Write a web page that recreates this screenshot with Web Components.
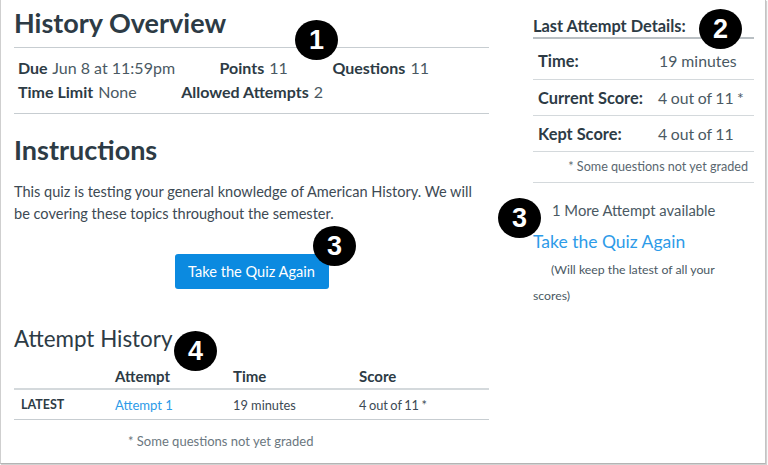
<!DOCTYPE html>
<html lang="en">
<head>
<meta charset="utf-8">
<title>History Overview</title>
<style>
  html, body { margin: 0; height: 100%; background: #fff; }
  body { font-family: Lato, "Liberation Sans", sans-serif; color: #2d3b45; overflow: hidden; }
</style>
</head>
<body>
<quiz-page>
  <quiz-overview slot="main"></quiz-overview>
  <quiz-instructions slot="main"></quiz-instructions>
  <attempt-history slot="main"></attempt-history>
  <attempt-details slot="side"></attempt-details>
  <next-attempt slot="side"></next-attempt>
  <step-badge n="1" style="left:294px;top:20px"></step-badge>
  <step-badge n="2" style="left:698px;top:9px"></step-badge>
  <step-badge n="3" style="left:497px;top:198px"></step-badge>
  <step-badge n="3" style="left:312px;top:226px"></step-badge>
  <step-badge n="4" style="left:173px;top:331px"></step-badge>
</quiz-page>

<script>
class QuizPage extends HTMLElement {
  constructor() {
    super();
    this.attachShadow({ mode: "open" });
    this.shadowRoot.innerHTML = `
      <style>
        :host {
          display: grid;
          grid-template-columns: 475px 221px;
          column-gap: 44px;
          box-sizing: border-box;
          width: 766px;
          height: 464px;
          padding: 0 0 0 13px;
          border-left: 1px solid #cfcfcf;
          border-right: 1px solid #c4c4c4;
          border-bottom: 1px solid #b4b4b4;
          box-shadow: 1px 1px 1px rgba(0, 0, 0, 0.18);
          position: relative;
        }
        .col { display: flex; flex-direction: column; min-width: 0; }
      </style>
      <div class="col"><slot name="main"></slot></div>
      <div class="col"><slot name="side"></slot></div>
      <slot></slot>
    `;
  }
}

class QuizOverview extends HTMLElement {
  constructor() {
    super();
    this.attachShadow({ mode: "open" });
    this.shadowRoot.innerHTML = `
      <style>
        :host { display: block; padding-top: 7px; }
        h1 {
          margin: 0;
          height: 40px;
          line-height: 32px;
          font-size: 27px;
          font-weight: 700;
          border-bottom: 1px solid #c7cdd1;
        }
        .facts {
          display: flex;
          flex-wrap: wrap;
          column-gap: 44.5px;
          padding: 8px 30px 9px 4px;
          border-bottom: 1px solid #c7cdd1;
          font-size: 16px;
          line-height: 24px;
          color: #4a5963;
        }
        b { font-weight: 700; color: #2d3b45; margin-right: 1px; }
      </style>
      <h1>History Overview</h1>
      <div class="facts">
        <span><b>Due</b> Jun 8 at 11:59pm</span>
        <span><b>Points</b> 11</span>
        <span><b>Questions</b> 11</span>
        <span><b>Time Limit</b> None</span>
        <span><b>Allowed Attempts</b> 2</span>
      </div>
    `;
  }
}

class QuizInstructions extends HTMLElement {
  constructor() {
    super();
    this.attachShadow({ mode: "open" });
    this.shadowRoot.innerHTML = `
      <style>
        :host { display: block; padding-top: 19px; }
        h2 { margin: 0 0 14px; font-size: 27px; line-height: 34px; font-weight: 700; }
        p { margin: 0; font-size: 14.55px; line-height: 22px; color: #3d4a54; }
        .action { display: flex; justify-content: center; margin-top: 29px; }
        a {
          display: block;
          width: 154px;
          height: 35px;
          line-height: 35px;
          text-align: center;
          background: #0b8ae0;
          color: #fff;
          border-radius: 3px;
          font-size: 14.6px;
        }
      </style>
      <h2>Instructions</h2>
      <p>This quiz is testing your general knowledge of American History. We will be covering these topics throughout the semester.</p>
      <div class="action"><a>Take the Quiz Again</a></div>
    `;
  }
}

class AttemptHistory extends HTMLElement {
  constructor() {
    super();
    this.attachShadow({ mode: "open" });
    this.shadowRoot.innerHTML = `
      <style>
        :host { display: block; padding-top: 36px; }
        h3 { margin: 0 0 9px; font-size: 22.4px; line-height: 28px; font-weight: 400; }
        .row {
          display: grid;
          grid-template-columns: 101px 118px 126px 1fr;
          align-items: center;
        }
        .head {
          height: 28px;
          padding-top: 1px;
          box-sizing: border-box;
          border-bottom: 2px solid #d4d9dc;
          font-size: 15px;
          font-weight: 700;
        }
        .body {
          height: 29px;
          border-bottom: 1px solid #c7cdd1;
          font-size: 12.8px;
          color: #3d4a54;
        }
        .score { word-spacing: -0.8px; }
        .tag { font-size: 12.5px; font-weight: 700; padding-left: 7px; color: #2d3b45; }
        a { color: #2d9be8; font-size: 13.1px; }
        .note { margin-top: 13px; padding-left: 114px; font-size: 13px; line-height: 17px; color: #6b7780; }
      </style>
      <h3>Attempt History</h3>
      <div class="row head"><span></span><span>Attempt</span><span>Time</span><span>Score</span></div>
      <div class="row body">
        <span class="tag">LATEST</span>
        <a>Attempt 1</a>
        <span>19 minutes</span>
        <span class="score">4 out of 11 *</span>
      </div>
      <div class="note">* Some questions not yet graded</div>
    `;
  }
}

class AttemptDetails extends HTMLElement {
  constructor() {
    super();
    this.attachShadow({ mode: "open" });
    this.shadowRoot.innerHTML = `
      <style>
        :host { display: block; padding-top: 17px; }
        .title {
          height: 20px;
          line-height: 18px;
          font-size: 16.4px;
          font-weight: 700;
          border-bottom: 2px solid #b9bfc3;
        }
        .row {
          display: grid;
          grid-template-columns: 120px 1fr;
          align-items: center;
          height: 34px;
          padding: 0 0 1px 5px;
          border-bottom: 1px solid #d4d9dc;
          font-size: 15.8px;
          color: #4a5963;
        }
        .row.first { height: 36px; padding-top: 3px; }
        .row b { color: #2d3b45; font-size: 16.4px; }
        .score { word-spacing: -0.5px; }
        .note {
          height: 30px;
          line-height: 30px;
          text-align: right;
          padding-right: 6px;
          border-bottom: 1px solid #d4d9dc;
          font-size: 12.6px;
          color: #5a6770;
        }
      </style>
      <div class="title">Last Attempt Details:</div>
      <div class="row first"><b>Time:</b><span style="padding-left:1px">19 minutes</span></div>
      <div class="row"><b>Current Score:</b><span class="score">4 out of 11 *</span></div>
      <div class="row"><b>Kept Score:</b><span class="score">4 out of 11</span></div>
      <div class="note">* Some questions not yet graded</div>
    `;
  }
}

class NextAttempt extends HTMLElement {
  constructor() {
    super();
    this.attachShadow({ mode: "open" });
    this.shadowRoot.innerHTML = `
      <style>
        :host { display: block; padding-top: 18px; color: #4a5963; }
        .more { padding-left: 19px; font-size: 14.8px; line-height: 18px; }
        a { display: block; margin-top: 12px; font-size: 17.5px; line-height: 22px; color: #2d9be8; }
        p { margin: 4px 0 0; font-size: 12.3px; line-height: 26px; text-indent: 18px; }
      </style>
      <div class="more">1 More Attempt available</div>
      <a>Take the Quiz Again</a>
      <p>(Will keep the latest of all your scores)</p>
    `;
  }
}

class StepBadge extends HTMLElement {
  constructor() {
    super();
    this.attachShadow({ mode: "open" });
    this.shadowRoot.innerHTML = `
      <style>
        :host {
          position: absolute;
          display: flex;
          align-items: center;
          justify-content: center;
          width: 43px;
          height: 40px;
          border-radius: 50%;
          background: #000;
          color: #fff;
          font-family: "Liberation Sans", sans-serif;
          font-weight: 700;
          font-size: 27px;
        }
      </style>
      <span id="n"></span>
    `;
  }

  connectedCallback() {
    this.shadowRoot.getElementById("n").textContent = this.getAttribute("n");
  }
}

customElements.define("quiz-page", QuizPage);
customElements.define("quiz-overview", QuizOverview);
customElements.define("quiz-instructions", QuizInstructions);
customElements.define("attempt-history", AttemptHistory);
customElements.define("attempt-details", AttemptDetails);
customElements.define("next-attempt", NextAttempt);
customElements.define("step-badge", StepBadge);
</script>
</body>
</html>
